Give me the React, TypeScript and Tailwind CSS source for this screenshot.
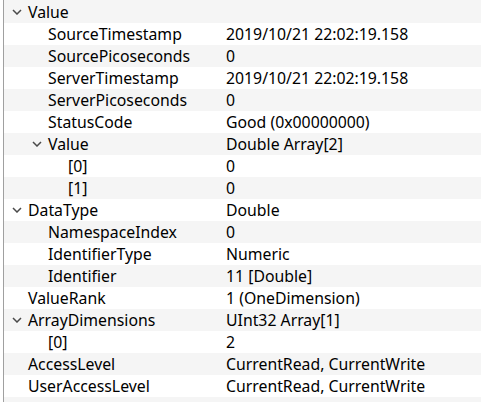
import React from 'react'

type Row = { name: string; value: string; level: number; open?: boolean }

const rows: Row[] = [
  { name: 'Value', value: '', level: 0, open: true },
  { name: 'SourceTimestamp', value: '2019/10/21 22:02:19.158', level: 1 },
  { name: 'SourcePicoseconds', value: '0', level: 1 },
  { name: 'ServerTimestamp', value: '2019/10/21 22:02:19.158', level: 1 },
  { name: 'ServerPicoseconds', value: '0', level: 1 },
  { name: 'StatusCode', value: 'Good (0x00000000)', level: 1 },
  { name: 'Value', value: 'Double Array[2]', level: 1, open: true },
  { name: '[0]', value: '0', level: 2 },
  { name: '[1]', value: '0', level: 2 },
  { name: 'DataType', value: 'Double', level: 0, open: true },
  { name: 'NamespaceIndex', value: '0', level: 1 },
  { name: 'IdentifierType', value: 'Numeric', level: 1 },
  { name: 'Identifier', value: '11 [Double]', level: 1 },
  { name: 'ValueRank', value: '1 (OneDimension)', level: 0 },
  { name: 'ArrayDimensions', value: 'UInt32 Array[1]', level: 0, open: true },
  { name: '[0]', value: '2', level: 1 },
  { name: 'AccessLevel', value: 'CurrentRead, CurrentWrite', level: 0 },
  { name: 'UserAccessLevel', value: 'CurrentRead, CurrentWrite', level: 0 },
]

// indent widths per level, written out so tailwind picks them up
const indent = ['w-[24px]', 'w-[44px]', 'w-[64px]']

function Chevron() {
  return (
    <svg width="10" height="6" viewBox="0 0 10 6" className="absolute right-[6px]">
      <path d="M1 1 L5 5 L9 1" fill="none" stroke="#4a4a4a" strokeWidth="1.5" />
    </svg>
  )
}

export default function App() {
  return (
    <div
      className="w-[481px] h-[402px] bg-white flex overflow-hidden text-[15.8px] text-black"
      style={{ fontFamily: '"Noto Sans", "Liberation Sans", sans-serif' }}
    >
      <div className="w-[3px] shrink-0" />
      <div className="w-px shrink-0 bg-[#a0a0a0]" />
      <div className="flex-1 bg-[#f5f5f5] pt-px">
        {rows.map((row, i) => (
          <div
            key={i}
            className={`h-[22px] flex items-center ${i % 2 === 0 ? 'bg-[#f5f5f5]' : 'bg-white'}`}
          >
            <div className="w-[222px] shrink-0 flex items-center">
              <div className={`${indent[row.level]} shrink-0 h-[22px] relative flex items-center`}>
                {row.open && <Chevron />}
              </div>
              <span className="leading-[22px] whitespace-nowrap">{row.name}</span>
            </div>
            <span className="leading-[22px] whitespace-nowrap">{row.value}</span>
          </div>
        ))}
      </div>
    </div>
  )
}
